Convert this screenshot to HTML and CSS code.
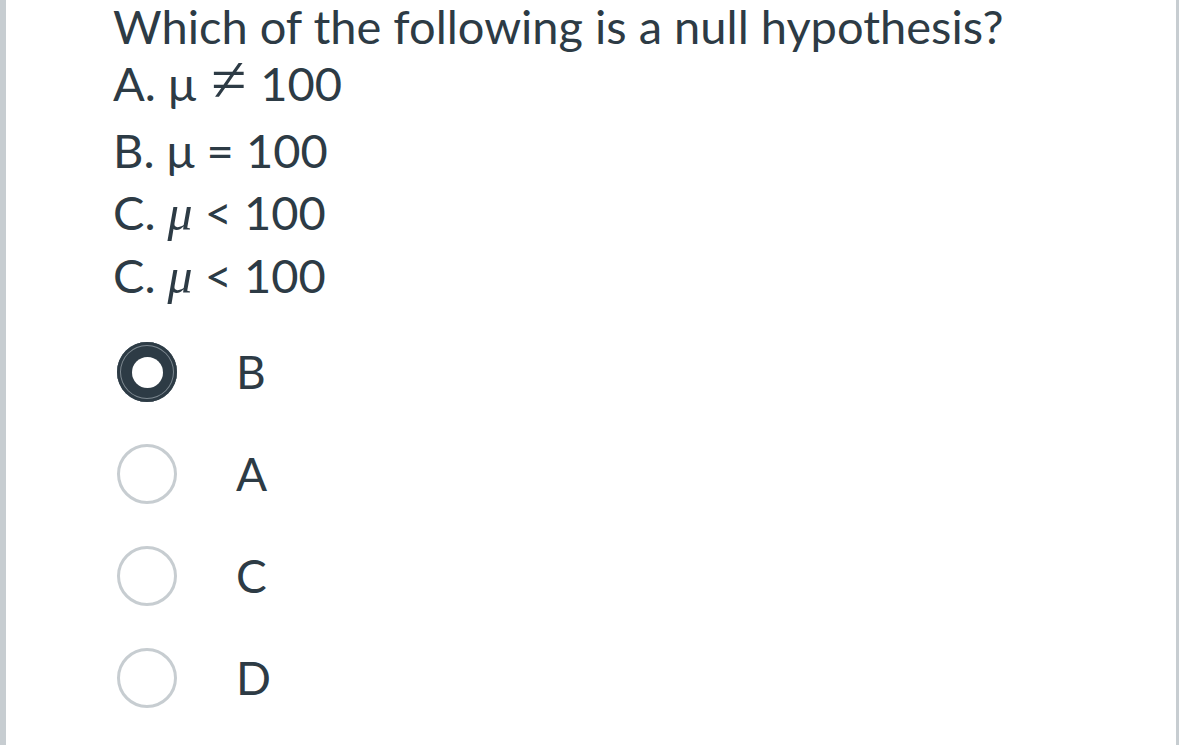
FILE: index.html
```html
<!DOCTYPE html>
<html lang="en">
<head>
<meta charset="utf-8">
<title>Quiz question</title>
<link rel="stylesheet" href="styles.css">
</head>
<body>
<div class="frame">
  <div class="question">
    <div class="line">Which of the following is a null hypothesis?</div>
    <div class="line line-raised">A. μ <span class="neq">≠</span> 100</div>
    <div class="line">B. μ = 100</div>
    <div class="line">C. <span class="mu">μ</span> &lt; 100</div>
    <div class="line">C. <span class="mu">μ</span> &lt; 100</div>
  </div>
  <div class="answers">
    <div class="answer">
      <span class="radio radio-checked"></span>
      <span class="label">B</span>
    </div>
    <div class="answer">
      <span class="radio"></span>
      <span class="label">A</span>
    </div>
    <div class="answer">
      <span class="radio"></span>
      <span class="label">C</span>
    </div>
    <div class="answer">
      <span class="radio"></span>
      <span class="label">D</span>
    </div>
  </div>
</div>
</body>
</html>
```

FILE: styles.css
```css
html, body {
  margin: 0;
  padding: 0;
  background: #ffffff;
}

body {
  font-family: Lato, "Open Sans", sans-serif;
  color: #2d3b45;
  overflow: hidden;
}

.frame {
  box-sizing: border-box;
  width: 1179px;
  height: 745px;
  border-left: 6px solid #c7cdd1;
  border-right: 3px solid #c7cdd1;
  overflow: hidden;
}

.question {
  margin-top: -5px;
  padding-left: 107px;
  font-size: 47px;
}

.line {
  line-height: 62px;
  white-space: nowrap;
}

.line-raised {
  margin-top: -5px;
  margin-bottom: 5px;
}

.neq {
  font-family: "Liberation Serif", serif;
  font-size: 64px;
  line-height: 0;
  margin: 0 2px 0 3px;
}

.mu {
  font-family: "Liberation Serif", serif;
  font-style: italic;
  font-size: 50px;
}

.answers {
  margin-top: 14px;
  padding-left: 111px;
  display: flex;
  flex-direction: column;
}

.answer {
  height: 102px;
  display: flex;
  align-items: center;
  gap: 59px;
}

.radio {
  box-sizing: border-box;
  width: 60px;
  height: 60px;
  border-radius: 50%;
  border: 3px solid #c7cdd1;
  background: #ffffff;
  flex: none;
  position: relative;
}

.radio-checked {
  border: none;
  background: #2d3b45;
  box-shadow: inset 0 0 0 3px #2d3b45, inset 0 0 0 4px #7d8890;
}

.radio-checked::after {
  content: "";
  position: absolute;
  left: 50%;
  top: 50%;
  width: 31px;
  height: 31px;
  margin: -15.5px 0 0 -15.5px;
  border-radius: 50%;
  background: #ffffff;
}

.label {
  font-size: 46px;
  line-height: 1;
}
```
